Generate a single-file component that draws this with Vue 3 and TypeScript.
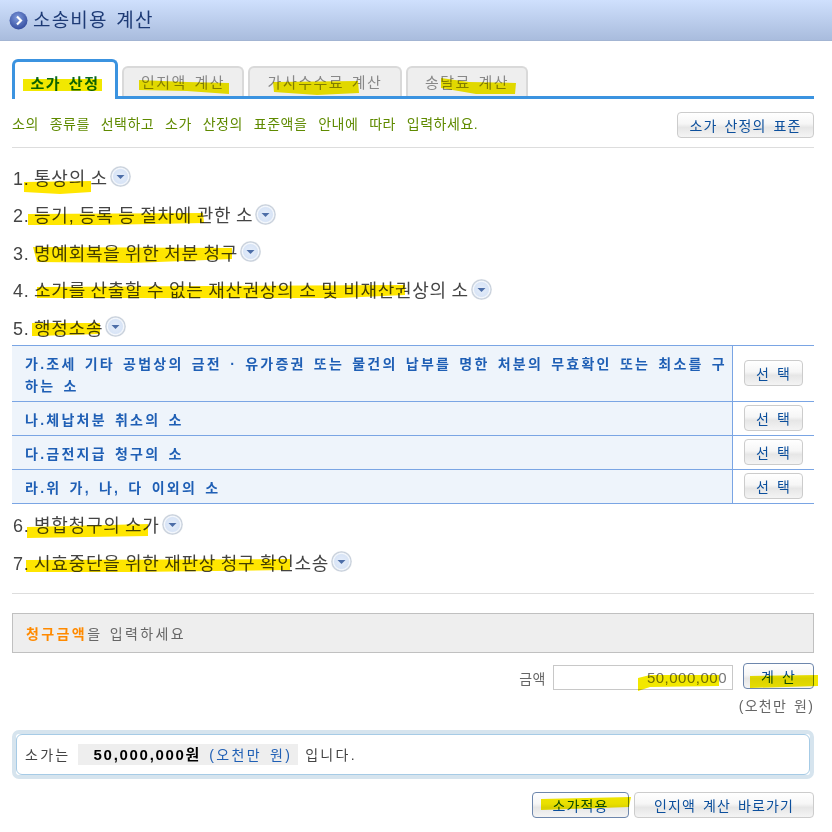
<script setup lang="ts">
interface Section {
  no: string
  label: string
}

const tabs = [
  { id: 'value', label: '소가 산정' },
  { id: 'stamp', label: '인지액 계산' },
  { id: 'family', label: '가사수수료 계산' },
  { id: 'post', label: '송달료 계산' },
]

const topSections: Section[] = [
  { no: '1.', label: '통상의 소' },
  { no: '2.', label: '등기, 등록 등 절차에 관한 소' },
  { no: '3.', label: '명예회복을 위한 처분 청구' },
  { no: '4.', label: '소가를 산출할 수 없는 재산권상의 소 및 비재산권상의 소' },
  { no: '5.', label: '행정소송' },
]

const bottomSections: Section[] = [
  { no: '6.', label: '병합청구의 소가' },
  { no: '7.', label: '시효중단을 위한 재판상 청구 확인소송' },
]

const adminRows = [
  '가.조세 기타 공법상의 금전 · 유가증권 또는 물건의 납부를 명한 처분의 무효확인 또는 최소를 구하는 소',
  '나.체납처분 취소의 소',
  '다.금전지급 청구의 소',
  '라.위 가, 나, 다 이외의 소',
]

// highlighter strokes someone drew over the screenshot
const marks = [
  { c: '#f2e800', p: '23,79 102,79 102,91 23,91' },
  { c: '#f2e800', p: '139,80 187,82 229,83 229,94 187,91 139,90' },
  { c: '#f2e800', p: '273,82 358,81 359,93 317,95 274,92' },
  { c: '#f2e800', p: '441,78 469,82 516,83 515,94 476,94 441,88' },
  { c: '#ffe600', p: '24,182 91,181 91,192 60,194 24,192' },
  { c: '#ffe600', p: '28,214 203,213 204,223 100,225 28,225' },
  { c: '#ffe600', p: '33,247 232,248 232,259 133,263 37,262' },
  { c: '#ffe600', p: '37,287 405,285 405,295 340,298 37,298' },
  { c: '#ffe600', p: '32,323 100,323 100,334 36,336 32,336' },
  { c: '#ffe600', p: '27,527 148,524 148,536 27,538' },
  { c: '#ffe600', p: '26,560 290,559 290,570 133,572 26,572' },
  { c: '#f2e800', p: '638,678 650,675 719,675 719,686 650,687 638,691' },
  { c: '#f2e800', p: '750,676 818,675 818,686 750,688' },
  { c: '#f2e800', p: '541,799 631,797 629,807 541,810' },
]
</script>

<template>
  <div class="page">
    <header class="title-bar">
      <svg class="title-icon" width="19" height="19" viewBox="0 0 19 19">
        <defs>
          <radialGradient id="ball" cx="45%" cy="35%" r="70%">
            <stop offset="0" stop-color="#7f9bdc" />
            <stop offset="1" stop-color="#2f479b" />
          </radialGradient>
        </defs>
        <circle cx="9.5" cy="9.5" r="9" fill="url(#ball)" />
        <path d="M8 5.5l4 4-4 4" fill="none" stroke="#fff" stroke-width="2.2" />
      </svg>
      <h1>소송비용 계산</h1>
    </header>

    <main class="content">
      <div class="tabs">
        <div v-for="(tab, i) in tabs" :key="tab.id" :class="['tab', { active: i === 0 }]">{{ tab.label }}</div>
      </div>

      <div class="guide">
        <p>소의 종류를 선택하고 소가 산정의 표준액을 안내에 따라 입력하세요.</p>
        <button type="button" class="btn wide">소가 산정의 표준</button>
      </div>

      <div class="sections">
        <div v-for="s in topSections" :key="s.no" class="section">
          <span class="section-text">{{ s.no }} {{ s.label }}</span>
          <svg class="drop" width="21" height="21" viewBox="0 0 21 21">
            <defs>
              <radialGradient id="drop-fill" cx="50%" cy="50%" r="50%">
                <stop offset="0" stop-color="#e6eefa" />
                <stop offset="0.66" stop-color="#d8e4f6" />
                <stop offset="0.78" stop-color="#f6f9fd" />
                <stop offset="0.9" stop-color="#c6cfdb" />
                <stop offset="1" stop-color="#dfe3e8" />
              </radialGradient>
            </defs>
            <circle cx="10.5" cy="10.5" r="10.5" fill="url(#drop-fill)" />
            <path d="M6.500 9h8l-4 4z" fill="#4d6ea8" />
          </svg>
        </div>

        <table class="admin">
          <tbody>
            <tr v-for="row in adminRows" :key="row">
              <td class="admin-text">{{ row }}</td>
              <td class="admin-action"><button type="button" class="btn pick">선 택</button></td>
            </tr>
          </tbody>
        </table>

        <div v-for="s in bottomSections" :key="s.no" class="section">
          <span class="section-text">{{ s.no }} {{ s.label }}</span>
          <svg class="drop" width="21" height="21" viewBox="0 0 21 21">
            <circle cx="10.5" cy="10.5" r="10.5" fill="url(#drop-fill)" />
            <path d="M6.500 9h8l-4 4z" fill="#4d6ea8" />
          </svg>
        </div>
      </div>

      <div class="amount-prompt"><b>청구금액</b>을 입력하세요</div>

      <div class="amount-row">
        <label for="amount">금액</label>
        <input id="amount" type="text" value="50,000,000" />
        <button type="button" class="btn strong calc">계 산</button>
      </div>
      <div class="amount-words">(오천만 원)</div>

      <div class="result">
        <div class="result-inner">
          <span>소가는</span>
          <span class="result-value"><b>50,000,000원</b> <em>(오천만 원)</em></span>
          <span>입니다.</span>
        </div>
      </div>

      <div class="actions">
        <button type="button" class="btn strong apply">소가적용</button>
        <button type="button" class="btn go">인지액 계산 바로가기</button>
      </div>
    </main>

    <svg class="marks" width="832" height="832" viewBox="0 0 832 832">
      <polygon v-for="m in marks" :key="m.p" :points="m.p" :fill="m.c" />
    </svg>
  </div>
</template>

<style scoped>
.page {
  position: relative;
  width: 832px;
  height: 832px;
  overflow: hidden;
  background: #fff;
  color: #444;
  font-family: "Liberation Sans", "Noto Sans CJK KR", sans-serif;
}

.title-bar {
  display: flex;
  align-items: center;
  gap: 5px;
  height: 41px;
  padding-left: 9px;
  box-sizing: border-box;
  border-bottom: 1px solid #a3b5d3;
  background: linear-gradient(#cfe0fd, #a9bcdd);
}

.title-bar h1 {
  margin: 2px 0 0;
  font-size: 19px;
  font-weight: 400;
  line-height: 24px;
  letter-spacing: 1.2px;
  word-spacing: 2px;
  color: #1d3a75;
}

.content {
  display: flex;
  flex-direction: column;
  width: 802px;
  margin-left: 12px;
}

.tabs {
  display: flex;
  align-items: flex-end;
  gap: 4px;
  height: 40px;
  margin-top: 18px;
  box-sizing: border-box;
  border-bottom: 3px solid #3b93e0;
}

.tab {
  width: 122px;
  height: 30px;
  box-sizing: border-box;
  border: 2px solid #d9d9d9;
  border-bottom: 0;
  border-radius: 6px 6px 0 0;
  background: #eee;
  color: #888;
  font-size: 15px;
  line-height: 29px;
  letter-spacing: 1.5px;
  word-spacing: 2px;
  text-align: center;
}

.tab:nth-child(3) {
  width: 154px;
}

.tab.active {
  width: 106px;
  height: 40px;
  margin-bottom: -3px;
  border: 3px solid #3b93e0;
  border-bottom: 0;
  background: #fff;
  color: #0c6a1f;
  font-weight: 700;
  line-height: 44px;
}

.guide {
  display: flex;
  align-items: center;
  justify-content: space-between;
  height: 49px;
  padding-top: 4px;
  box-sizing: border-box;
  border-bottom: 1px solid #ddd;
}

.guide p {
  margin: 0 0 4px;
  font-size: 14px;
  letter-spacing: 0.5px;
  word-spacing: 6.5px;
  color: #5f8a00;
}

.btn {
  height: 26px;
  padding: 0;
  box-sizing: border-box;
  border: 1px solid #ccc;
  border-radius: 4px;
  background: linear-gradient(#fff, #f6f6f6 45%, #e6e6e6 60%, #f4f4f4);
  color: #0c4f9c;
  font-family: inherit;
  font-size: 14px;
  letter-spacing: 1.1px;
  word-spacing: 2px;
}

.btn.strong {
  border-color: #6d86ac;
}

.wide {
  width: 137px;
}

.sections {
  display: flex;
  flex-direction: column;
  padding-top: 10px;
  padding-bottom: 12px;
  border-bottom: 1px solid #ddd;
}

.section {
  display: flex;
  align-items: center;
  height: 37.500px;
  padding-left: 1px;
  font-size: 18px;
}

.section-text {
  letter-spacing: 0.7px;
  word-spacing: -1px;
}

.drop {
  margin-left: 2px;
}

.admin {
  width: 100%;
  margin-top: -1px;
  margin-bottom: 2px;
  border-collapse: collapse;
  border-top: 1px solid #7aa5e4;
}

.admin td {
  border-bottom: 1px solid #7aa5e4;
}

.admin-text {
  padding: 7px 5px 4px 13px;
  background: #eef4fb;
  border-right: 1px solid #7aa5e4;
  color: #1f5fb5;
  font-size: 14px;
  font-weight: 700;
  line-height: 22px;
  letter-spacing: 2.25px;
  word-spacing: 2px;
}

.admin-action {
  width: 79px;
  text-align: center;
}

.pick {
  display: block;
  width: 59px;
  margin: 0 0 0 10px;
}

.amount-prompt {
  height: 40px;
  margin-top: 19px;
  padding-left: 13px;
  box-sizing: border-box;
  border: 1px solid #c0c0c0;
  background: #eee;
  color: #666;
  font-size: 14px;
  line-height: 40px;
  letter-spacing: 2.4px;
  word-spacing: 1px;
}

.amount-prompt b {
  color: #ff8a00;
}

.amount-row {
  display: flex;
  align-items: flex-start;
  justify-content: flex-end;
  margin-top: 10px;
  color: #666;
  font-size: 14px;
}

.amount-row label {
  margin-top: 5px;
  margin-right: 7px;
  letter-spacing: 0.5px;
}

.amount-row input {
  width: 180px;
  height: 25px;
  margin-top: 2px;
  margin-right: 10px;
  padding: 0 5px 0 0;
  box-sizing: border-box;
  border: 1px solid #c8c8c8;
  outline: none;
  color: #777;
  font-family: inherit;
  font-size: 15px;
  letter-spacing: 0.5px;
  text-align: right;
}

.calc {
  width: 71px;
}

.amount-words {
  margin-top: 7px;
  color: #666;
  font-size: 14px;
  line-height: 18px;
  letter-spacing: 1.2px;
  word-spacing: 2px;
  text-align: right;
}

.result {
  height: 49px;
  margin-top: 15px;
  box-sizing: border-box;
  border: 4px solid #d6e4ee;
  border-radius: 7px;
}

.result-inner {
  display: flex;
  align-items: center;
  gap: 7px;
  height: 100%;
  padding-left: 8px;
  box-sizing: border-box;
  border: 1px solid #a6cbe6;
  border-radius: 6px;
  font-size: 14px;
  letter-spacing: 2.3px;
  word-spacing: 2px;
}

.result-value {
  height: 21px;
  padding: 0 6px 0 16px;
  background: #eee;
  line-height: 21px;
}

.result-value b {
  color: #000;
  font-size: 15px;
  letter-spacing: 1.7px;
}

.result-value em {
  color: #1f5fb5;
  font-style: normal;
}

.actions {
  display: flex;
  justify-content: flex-end;
  gap: 5px;
  margin-top: 13px;
}

.apply {
  width: 97px;
}

.go {
  width: 180px;
}

.marks {
  position: absolute;
  inset: 0;
  pointer-events: none;
  mix-blend-mode: multiply;
}
</style>
